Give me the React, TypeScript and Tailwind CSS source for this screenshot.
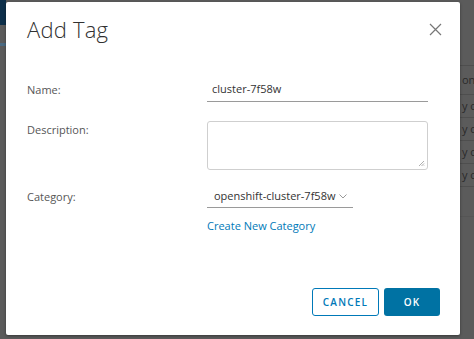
import React from "react";

export default function App() {
  const font = { fontFamily: '"Open Sans", "Noto Sans", sans-serif' } as React.CSSProperties;
  return (
    <div className="relative w-[474px] h-[339px] overflow-hidden bg-[#5b5b5b]" style={font}>
      {/* dimmed background page */}
      <div className="flex h-full">
        <div className="w-[6px] flex flex-col">
          <div className="h-[25px] bg-[#0d2f4a]" />
          <div className="h-[18px]" />
          <div className="h-[3px] bg-[#4a6a82]" />
          <div className="flex-1" />
        </div>
        <div className="flex-1" />
        <div className="w-[14px] overflow-hidden flex flex-col text-[11px] text-[#2a2a2a]">
          <div className="h-[65px]" />
          <div className="h-[30px] border-t border-b border-[#4e4e4e] flex items-center pl-[2px]">on</div>
          <div className="h-[23px] border-b border-[#4e4e4e] flex items-center pl-[2px] whitespace-nowrap">y c</div>
          <div className="h-[23px] border-b border-[#4e4e4e] flex items-center pl-[2px] whitespace-nowrap">y c</div>
          <div className="h-[23px] border-b border-[#4e4e4e] flex items-center pl-[2px] whitespace-nowrap">y c</div>
          <div className="h-[23px] border-b border-[#4e4e4e] flex items-center pl-[2px] whitespace-nowrap">y c</div>
          <div className="h-[30px] border-b border-[#555]" />
        </div>
      </div>

      {/* modal */}
      <div className="absolute left-[6px] top-[2px] w-[454px] h-[333px] bg-white rounded-[2px] shadow-[0_1px_3px_rgba(0,0,0,0.4)] flex flex-col">
        <div className="flex items-start justify-between pl-[21px] pr-[18px] pt-[12px]">
          <div className="text-[22px] font-light text-[#313131] leading-[30px] tracking-[0.2px]">Add Tag</div>
          <svg width="13" height="13" viewBox="0 0 13 13" className="mt-[9px]">
            <path d="M1 1 L12 12 M12 1 L1 12" stroke="#777" strokeWidth="1.2" fill="none" />
          </svg>
        </div>

        <div className="flex flex-col pl-[21px] pr-[32px] mt-[34px] text-[11px] text-[#565656]">
          <div className="flex items-center h-[24px]">
            <div className="w-[180px]">Name:</div>
            <div className="flex-1 h-[24px] border-b border-[#9a9a9a] flex items-center pl-[5px] text-[#333]">cluster-7f58w</div>
          </div>

          <div className="flex mt-[19px]">
            <div className="w-[180px] pt-[1px]">Description:</div>
            <div className="relative flex-1 h-[49px] border border-[#cfcfcf] rounded-[3px]">
              <svg width="7" height="7" viewBox="0 0 7 7" className="absolute right-[2px] bottom-[2px]">
                <path d="M6 1 L1 6 M6 3.5 L3.5 6 M6 5.5 L5.5 6" stroke="#999" strokeWidth="0.8" />
              </svg>
            </div>
          </div>

          <div className="flex items-center mt-[16px] h-[22px]">
            <div className="w-[180px]">Category:</div>
            <div className="w-[146px] h-[22px] border-b border-[#9a9a9a] flex items-center justify-between pl-[7px] pr-[6px] text-[#333]">
              <span>openshift-cluster-7f58w</span>
              <svg width="8" height="5" viewBox="0 0 8 5">
                <path d="M0.5 0.5 L4 4 L7.5 0.5" stroke="#999" strokeWidth="1" fill="none" />
              </svg>
            </div>
          </div>

          <div className="flex mt-[10px]">
            <div className="w-[180px]" />
            <div className="text-[#0079b8]">Create New Category</div>
          </div>
        </div>

        <div className="flex-1" />

        <div className="flex justify-end gap-[5px] pr-[20px] pb-[19px]">
          <button className="w-[67px] h-[28px] border border-[#0079b8] rounded-[3px] text-[10px] font-semibold tracking-[1.2px] text-[#0079b8] bg-white">CANCEL</button>
          <button className="w-[56px] h-[28px] rounded-[3px] text-[10px] font-semibold tracking-[1.2px] text-white bg-[#0072a3]">OK</button>
        </div>
      </div>
    </div>
  );
}
